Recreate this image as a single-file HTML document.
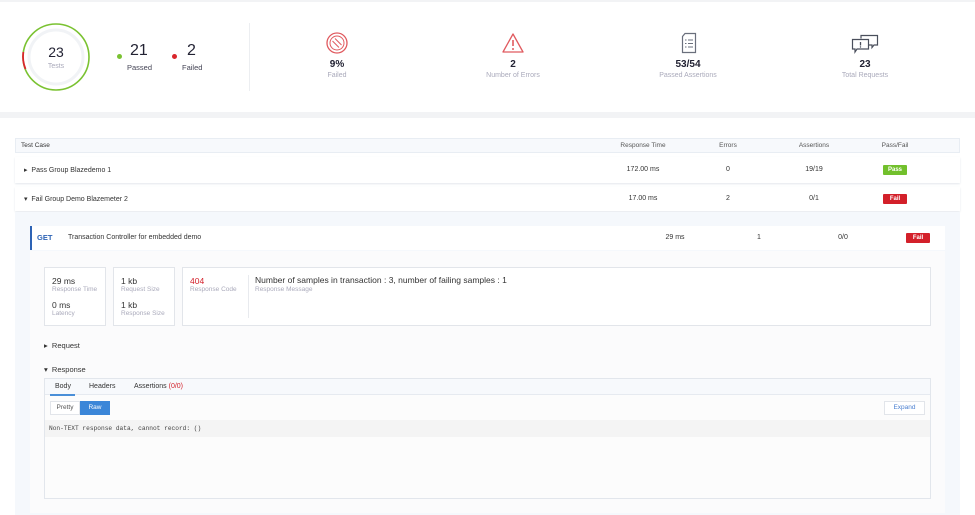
<!DOCTYPE html>
<html><head><meta charset="utf-8"><style>
*{margin:0;padding:0;box-sizing:border-box}
body{width:975px;height:515px;overflow:hidden;background:#fff;font-family:"Liberation Sans",sans-serif;color:#333;position:relative}
.a{position:absolute}
.c{text-align:center}
.lbl{font-size:7px;color:#aab}
.num{font-size:10px;color:#223;font-weight:bold}
.badge{position:absolute;width:24px;height:10px;font-size:6px;color:#fff;font-weight:bold;text-align:center;line-height:10px;border-radius:1px}
.t{font-size:7px;color:#333}
.box{position:absolute;background:#fff;border:1px solid #e2e5ea}
.v{font-size:8.5px;color:#333}
.s{font-size:6.5px;color:#aab}
</style></head><body>
<div class="a" style="left:0;top:0;width:975px;height:2px;background:#f2f3f5"></div>
<div class="a" style="left:0;top:112px;width:975px;height:6px;background:#f2f3f5"></div>
<svg class="a" style="left:20px;top:21px" width="72" height="72">
<circle cx="36" cy="36" r="27" fill="#fff" stroke="#f1f3f6" stroke-width="3"/>
<circle cx="36" cy="36" r="33" fill="none" stroke="#7ac231" stroke-width="1.6"/>
<path d="M5.5 48 A33 33 0 0 1 3.3 31" fill="none" stroke="#d9262c" stroke-width="1.8"/>
</svg>
<div class="a c" style="left:36px;top:44px;width:40px;font-size:14px;color:#223">23</div>
<div class="a c lbl" style="left:36px;top:63px;width:40px;font-size:7px">Tests</div>
<div class="a" style="left:117px;top:54px;width:5px;height:5px;border-radius:50%;background:#7ac231"></div>
<div class="a" style="left:130px;top:42px;font-size:16px;color:#223">21</div>
<div class="a" style="left:127px;top:63px;font-size:7.5px;color:#445">Passed</div>
<div class="a" style="left:172px;top:54px;width:5px;height:5px;border-radius:50%;background:#d9262c"></div>
<div class="a" style="left:187px;top:42px;font-size:16px;color:#223">2</div>
<div class="a" style="left:182px;top:63px;font-size:7.5px;color:#445">Failed</div>
<div class="a" style="left:249px;top:23px;width:1px;height:68px;background:#eceef1"></div>

<svg class="a" style="left:326px;top:32px" width="22" height="22"><circle cx="11" cy="11" r="10" fill="none" stroke="#e05a5f" stroke-width="1.3"/><circle cx="11" cy="11" r="7" fill="none" stroke="#e05a5f" stroke-width="1"/><path d="M6.5 9 L13 15.5 M9 6.5 L15.5 13" stroke="#e05a5f" stroke-width="1"/></svg>
<div class="a c num" style="left:307px;top:59px;width:60px">9%</div>
<div class="a c lbl" style="left:307px;top:72px;width:60px">Failed</div>

<svg class="a" style="left:501px;top:32px" width="24" height="22"><path d="M12 2 L22 20 L2 20 Z" fill="none" stroke="#e05a5f" stroke-width="1.3" stroke-linejoin="round"/><path d="M12 8 V14" stroke="#e05a5f" stroke-width="1.6"/><circle cx="12" cy="17" r="1" fill="#e05a5f"/></svg>
<div class="a c num" style="left:473px;top:59px;width:80px">2</div>
<div class="a c lbl" style="left:463px;top:72px;width:100px">Number of Errors</div>

<svg class="a" style="left:680px;top:32px" width="18" height="22"><path d="M5 1.5 H15.5 V20.5 H2.5 V4.5 Z" fill="none" stroke="#6a6f7c" stroke-width="1.2"/><path d="M5 8H6.5M8 8H13M5 11.5H6.5M8 11.5H13M5 15H6.5M8 15H13" stroke="#6a6f7c" stroke-width="1"/></svg>
<div class="a c num" style="left:648px;top:59px;width:80px">53/54</div>
<div class="a c lbl" style="left:638px;top:72px;width:100px">Passed Assertions</div>

<svg class="a" style="left:851px;top:34px" width="28" height="20"><path d="M10 4.5 V1.5 H26.5 V11 H23 L21 13.5 V11 H18" fill="none" stroke="#4a4f5c" stroke-width="1.2"/><path d="M1.5 5.5 H17.5 V15 H6 L4 18 V15 H1.5 Z" fill="none" stroke="#4a4f5c" stroke-width="1.2"/><path d="M9.5 8 V11.5" stroke="#4a4f5c" stroke-width="1.3"/><circle cx="9.5" cy="13" r=".7" fill="#4a4f5c"/></svg>
<div class="a c num" style="left:825px;top:59px;width:80px">23</div>
<div class="a c lbl" style="left:815px;top:72px;width:100px">Total Requests</div>

<div class="a" style="left:15px;top:138px;width:945px;height:15px;background:#f7f9fc;border:1px solid #e8edf3"></div>
<div class="a" style="left:21px;top:142px;font-size:6.5px;color:#333">Test Case</div>
<div class="a c" style="left:603px;top:142px;width:80px;font-size:6.5px;color:#555">Response Time</div>
<div class="a c" style="left:698px;top:142px;width:60px;font-size:6.5px;color:#555">Errors</div>
<div class="a c" style="left:784px;top:142px;width:60px;font-size:6.5px;color:#555">Assertions</div>
<div class="a c" style="left:865px;top:142px;width:60px;font-size:6.5px;color:#555">Pass/Fail</div>

<div class="a" style="left:15px;top:157px;width:945px;height:26px;background:#fff;box-shadow:0 1px 2px #e3e7ec"></div>
<div class="a t" style="left:24px;top:166px">▸&nbsp; Pass Group Blazedemo 1</div>
<div class="a c t" style="left:603px;top:166px;width:80px">172.00 ms</div>
<div class="a c t" style="left:698px;top:166px;width:60px">0</div>
<div class="a c t" style="left:784px;top:166px;width:60px">19/19</div>
<div class="badge" style="left:883px;top:165px;background:#72c02c">Pass</div>

<div class="a" style="left:15px;top:187px;width:945px;height:24px;background:#fff;box-shadow:0 1px 2px #e3e7ec"></div>
<div class="a t" style="left:24px;top:195px">▾&nbsp; Fail Group Demo Blazemeter 2</div>
<div class="a c t" style="left:603px;top:195px;width:80px">17.00 ms</div>
<div class="a c t" style="left:698px;top:195px;width:60px">2</div>
<div class="a c t" style="left:784px;top:195px;width:60px">0/1</div>
<div class="badge" style="left:883px;top:194px;background:#d3202a">Fail</div>

<div class="a" style="left:15px;top:212px;width:945px;height:303px;background:#f5f8fc"></div>
<div class="a" style="left:30px;top:226px;width:915px;height:24px;background:#fff;border-left:2px solid #2d63b5"></div>
<div class="a" style="left:37px;top:233px;font-size:7.5px;color:#2d63b5;font-weight:bold">GET</div>
<div class="a t" style="left:68px;top:234px">Transaction Controller for embedded demo</div>
<div class="a c t" style="left:645px;top:234px;width:60px">29 ms</div>
<div class="a c t" style="left:729px;top:234px;width:60px">1</div>
<div class="a c t" style="left:813px;top:234px;width:60px">0/0</div>
<div class="badge" style="left:906px;top:233px;background:#d3202a">Fail</div>
<div class="a" style="left:30px;top:251px;width:915px;height:262px;background:#fbfbfc"></div>

<div class="box" style="left:44px;top:267px;width:62px;height:59px"></div>
<div class="a v" style="left:52px;top:276px">29 ms</div><div class="a s" style="left:52px;top:286px">Response Time</div>
<div class="a v" style="left:52px;top:300px">0 ms</div><div class="a s" style="left:52px;top:310px">Latency</div>
<div class="box" style="left:113px;top:267px;width:62px;height:59px"></div>
<div class="a v" style="left:121px;top:276px">1 kb</div><div class="a s" style="left:121px;top:286px">Request Size</div>
<div class="a v" style="left:121px;top:300px">1 kb</div><div class="a s" style="left:121px;top:310px">Response Size</div>
<div class="box" style="left:182px;top:267px;width:749px;height:59px"></div>
<div class="a v" style="left:190px;top:276px;color:#d3202a">404</div><div class="a s" style="left:190px;top:286px">Response Code</div>
<div class="a" style="left:248px;top:275px;width:1px;height:43px;background:#e8eaee"></div>
<div class="a" style="left:255px;top:275px;font-size:8.5px;color:#333">Number of samples in transaction : 3, number of failing samples : 1</div>
<div class="a s" style="left:255px;top:286px">Response Message</div>

<div class="a" style="left:44px;top:341px;font-size:7.5px;color:#333">▸&nbsp; Request</div>
<div class="a" style="left:44px;top:365px;font-size:7.5px;color:#333">▾&nbsp; Response</div>
<div class="a" style="left:44px;top:378px;width:887px;height:121px;background:#fcfcfc;border:1px solid #e2e6ec"></div>
<div class="a" style="left:45px;top:379px;width:885px;height:16px;background:#f7f9fc;border-bottom:1px solid #e6eaf0"></div>
<div class="a" style="left:50px;top:394px;width:25px;height:1.5px;background:#4a8fd8"></div>
<div class="a" style="left:55px;top:383px;font-size:7px;color:#333">Body</div>
<div class="a" style="left:89px;top:383px;font-size:7px;color:#333">Headers</div>
<div class="a" style="left:134px;top:383px;font-size:7px;color:#333">Assertions <span style="color:#d3202a">(0/0)</span></div>
<div class="a" style="left:50px;top:401px;width:30px;height:14px;background:#fff;border:1px solid #e2e5ea;font-size:6.5px;color:#555;text-align:center;line-height:12px">Pretty</div>
<div class="a" style="left:80px;top:401px;width:30px;height:14px;background:#3b86d8;font-size:6.5px;color:#fff;text-align:center;line-height:14px">Raw</div>
<div class="a" style="left:884px;top:401px;width:41px;height:14px;background:#fff;border:1px solid #e2e5ea;font-size:6.5px;color:#4a7fd0;text-align:center;line-height:12px">Expand</div>
<div class="a" style="left:45px;top:420px;width:885px;height:17px;background:#f4f4f4"></div>
<div class="a" style="left:49px;top:425px;font-family:'Liberation Mono',monospace;font-size:6.2px;color:#444">Non-TEXT response data, cannot record: ()</div>
</body></html>
